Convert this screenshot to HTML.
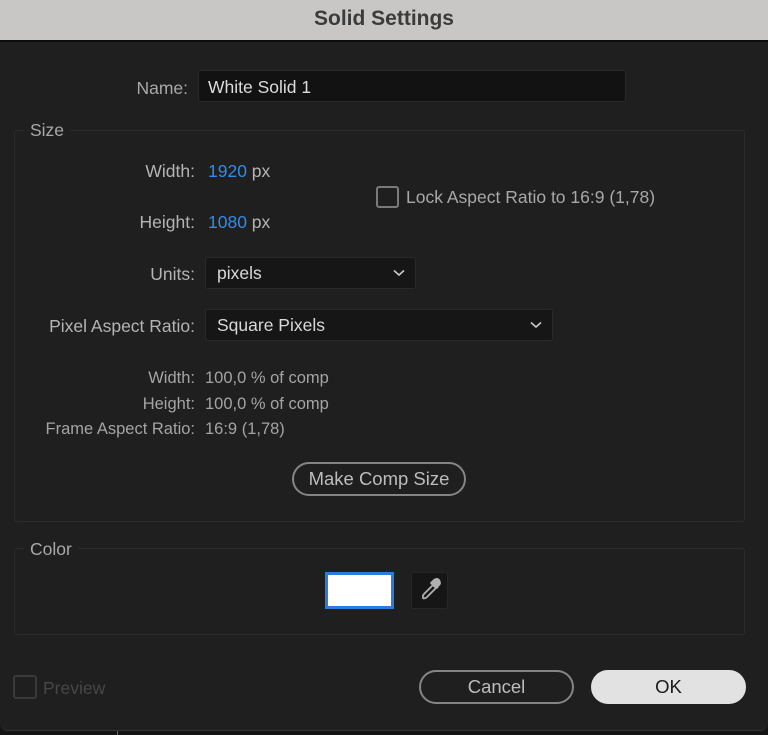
<!DOCTYPE html>
<html><head><meta charset="utf-8"><style>
*{margin:0;padding:0;box-sizing:border-box}
body{width:768px;height:735px;background:#141414;font-family:"Liberation Sans",sans-serif;overflow:hidden;position:relative;color:#b4b4b4}
.dlg{position:absolute;left:0;top:0;width:768px;height:731px;background:#1f1f1f;border-radius:0 0 8px 8px;border-bottom:1px solid #333}
.title{position:absolute;left:0;top:0;width:768px;height:42px;background:#c9c7c5;border-bottom:2px solid #0c0c0c;text-align:center;font-weight:bold;font-size:21px;line-height:38px;color:#3b3b3b}
.a{position:absolute;white-space:nowrap;line-height:20px}
.r{text-align:right}
.l17{font-size:17.5px}
.grp{position:absolute;border:1px solid #2b2b2b;border-radius:3px}
.glab{position:absolute;background:#1f1f1f;padding:0 6px;font-size:17.5px;color:#a8a8a8;line-height:20px}
.dd{position:absolute;background:#161616;border:1px solid #2a2a2a;border-radius:3px;color:#d8d8d8;font-size:17.5px;line-height:31px;padding-left:11px}
.dd svg{position:absolute;right:10px;top:11px}
.btn{position:absolute;border:2px solid #858585;border-radius:17px;text-align:center;font-size:18.5px;color:#bdbdbd;line-height:30px}
.blue{color:#2f8ceb}
.s16{font-size:16.5px;color:#a4a4a4}
</style></head><body>
<div class="dlg"></div>
<div class="title">Solid Settings</div>
<div class="a r l17" style="right:580px;top:78px;color:#a8a8a8">Name:</div>
<div style="position:absolute;left:198px;top:70px;width:428px;height:32px;background:#121212;border:1px solid #2a2a2a;border-radius:3px;color:#dcdcdc;font-size:17.5px;line-height:33px;padding-left:9px">White Solid 1</div>

<div class="grp" style="left:14px;top:130px;width:731px;height:392px"></div>
<div class="glab" style="left:24px;top:120px">Size</div>

<div class="a r l17" style="right:573px;top:161px">Width:</div>
<div class="a l17" style="left:208px;top:161px"><span class="blue">1920</span> px</div>
<div class="a r l17" style="right:573px;top:212px">Height:</div>
<div class="a l17" style="left:208px;top:212px"><span class="blue">1080</span> px</div>
<div style="position:absolute;left:376px;top:186px;width:23px;height:22px;border:2px solid #7a7a7a;border-radius:3px"></div>
<div class="a l17" style="left:406px;top:187px;color:#a8a8a8">Lock Aspect Ratio to 16:9 (1,78)</div>

<div class="a r l17" style="right:573px;top:264px">Units:</div>
<div class="dd" style="left:205px;top:257px;width:211px;height:32px">pixels<svg width="12" height="8" viewBox="0 0 12 8"><path d="M1 1.5L6 6L11 1.5" stroke="#c8c8c8" stroke-width="1.6" fill="none"/></svg></div>
<div class="a r l17" style="right:573px;top:316px">Pixel Aspect Ratio:</div>
<div class="dd" style="left:205px;top:309px;width:348px;height:32px">Square Pixels<svg width="12" height="8" viewBox="0 0 12 8"><path d="M1 1.5L6 6L11 1.5" stroke="#c8c8c8" stroke-width="1.6" fill="none"/></svg></div>

<div class="a r s16" style="right:573px;top:368px">Width:</div>
<div class="a s16" style="left:205px;top:368px">100,0 % of comp</div>
<div class="a r s16" style="right:573px;top:394px">Height:</div>
<div class="a s16" style="left:205px;top:394px">100,0 % of comp</div>
<div class="a r s16" style="right:573px;top:419px">Frame Aspect Ratio:</div>
<div class="a s16" style="left:205px;top:419px">16:9 (1,78)</div>

<div class="btn" style="left:292px;top:462px;width:174px;height:34px">Make Comp Size</div>

<div class="grp" style="left:14px;top:548px;width:731px;height:87px"></div>
<div class="glab" style="left:24px;top:539px">Color</div>
<div style="position:absolute;left:325px;top:572px;width:69px;height:37px;border:3px solid #2c7be0;background:#fff"></div>
<div style="position:absolute;left:411px;top:572px;width:37px;height:37px;background:#161616;border:1px solid #262626;border-radius:3px">
<svg width="35" height="35" viewBox="0 0 35 35"><path d="M20 9l6 6M22 7c1.5-1.5 4-1.5 5 0s1.5 3.5 0 5l-3 3-5-5zM21 12l-9 9c-1 1-1.5 3-1 4s3 0 4-1l9-9" stroke="#b0b0b0" stroke-width="1.8" fill="none" stroke-linejoin="round"/><path d="M22 7c1.5-1.5 4-1.5 5 0s1.5 3.5 0 5l-3 3-5-5z" fill="#b0b0b0"/></svg></div>

<div style="position:absolute;left:13px;top:675px;width:24px;height:24px;border:2px solid #3a3a3a;border-radius:3px"></div>
<div class="a" style="left:43px;top:678px;font-size:17.5px;color:#474747">Preview</div>
<div class="btn" style="left:419px;top:670px;width:155px;height:34px">Cancel</div>
<div class="btn" style="left:591px;top:670px;width:155px;height:34px;background:#e2e2e2;border-color:#e2e2e2;color:#1a1a1a">OK</div>
<div style="position:absolute;left:117px;top:731px;width:1px;height:4px;background:#2c6fcc"></div>
</body></html>
